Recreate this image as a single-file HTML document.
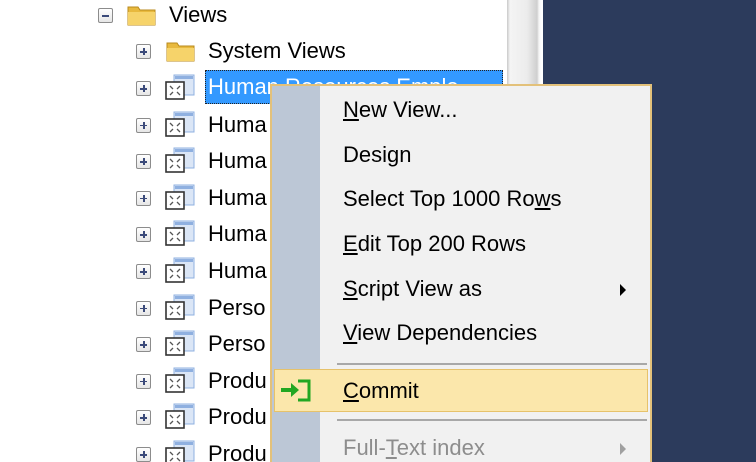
<!DOCTYPE html>
<html style="width:756px;height:462px;overflow:hidden"><head><style>
body{margin:0;width:756px;height:462px;overflow:hidden;position:relative;background:#fff;font-family:"Liberation Sans",sans-serif;}
.t{position:absolute;font-size:22px;color:#000;line-height:26px;white-space:nowrap}
.pb{position:absolute;left:136px;width:15px;height:15px;border:1px solid #8c8c8c;border-radius:2px;background:linear-gradient(#fff,#e6e6e6);box-sizing:border-box}
.pb:before{content:"";position:absolute;left:3px;top:6px;width:7px;height:1.6px;background:#3b4a7a}
.pb.p:after{content:"";position:absolute;left:6px;top:3px;width:1.6px;height:7px;background:#3b4a7a}
.ic{position:absolute;left:164px;width:32px;height:26px}
.fold{position:absolute;left:166px;width:30px;height:22px}
.m{position:absolute;left:343px;font-size:22px;line-height:26px;color:#000;white-space:nowrap}
u{text-decoration:underline;text-underline-offset:2px}
</style></head><body>
<div style="position:absolute;left:507px;top:0;width:36px;height:462px;background:linear-gradient(90deg,#c9c9c9 0,#f4f4f4 3px,#ececec 20px,#cfcfcf 30px,#f4f4f4 32px,#fff 34px)"></div>
<div style="position:absolute;left:543px;top:0;width:213px;height:462px;background:#2c3b5c"></div>

<div class="pb" style="left:98px;top:8px"></div>
<svg class="fold" style="left:127px;top:4px" viewBox="0 0 30 22"><path d="M1 3h10l2 3h15v15H1z" fill="#e8b93e" stroke="#b98a1c"/><path d="M1 8h27v13H1z" fill="#f6d36a"/></svg>
<div class="t" style="left:169px;top:2px">Views</div>

<div class="pb p" style="top:44px"></div>
<svg class="fold" style="top:40px" viewBox="0 0 30 22"><path d="M1 3h10l2 3h15v15H1z" fill="#e8b93e" stroke="#b98a1c"/><path d="M1 8h27v13H1z" fill="#f6d36a"/></svg>
<div class="t" style="left:208px;top:38px">System Views</div>

<div style="position:absolute;left:205px;top:70px;width:298px;height:34px;background:#3399ff;border:1px dotted #222;box-sizing:border-box"></div>
<div class="t" style="left:208px;top:74px;color:#fff">Human Resources.Emplo</div>

<div id="rows"></div>
<script>
var names=["","Huma","Huma","Huma","Huma","Huma","Perso","Perso","Produ","Produ","Produ"];
var h="";
for(var i=0;i<11;i++){var c=88+36.6*i;
h+='<div class="pb p" style="top:'+(c-7)+'px"></div>';
h+='<svg class="ic" style="top:'+(c-14)+'px" viewBox="0 0 32 26"><rect x="10" y="1" width="20" height="20" fill="#dbe6f6" stroke="#8fb0e0"/><rect x="11" y="2" width="18" height="3" fill="#8fb0e0"/><rect x="2" y="8" width="18" height="17" fill="#fff" stroke="#333" stroke-width="1.6"/><path d="M6 12l3 3M16 12l-3 3M6 21l3-3M16 21l-3-3" stroke="#555" stroke-width="1.3"/></svg>';
if(i>0)h+='<div class="t" style="left:208px;top:'+(c-13)+'px">'+names[i]+'</div>';}
document.getElementById("rows").innerHTML=h;
</script>

<div style="position:absolute;left:270px;top:84px;width:382px;height:378px;background:#f1f1f1;border:2px solid #e3c17a;border-bottom:none;box-sizing:border-box"></div>
<div style="position:absolute;left:272px;top:86px;width:48px;height:376px;background:#bcc7d6"></div>
<div class="m" style="top:97px"><u>N</u>ew View...</div>
<div class="m" style="top:142px">Design</div>
<div class="m" style="top:186px">Select Top 1000 Ro<u>w</u>s</div>
<div class="m" style="top:231px"><u>E</u>dit Top 200 Rows</div>
<div class="m" style="top:276px"><u>S</u>cript View as</div>
<svg style="position:absolute;left:618px;top:283px" width="10" height="14"><path d="M2 1l6 6-6 6z" fill="#000"/></svg>
<div class="m" style="top:320px"><u>V</u>iew Dependencies</div>
<div style="position:absolute;left:337px;top:363px;width:310px;height:2px;background:#a8a8a8"></div>
<div style="position:absolute;left:274px;top:369px;width:374px;height:43px;background:#fbe7ab;border:1px solid #e6c26b;box-sizing:border-box"></div>
<svg style="position:absolute;left:280px;top:379px" width="34" height="24" viewBox="0 0 34 24"><path d="M18 2h11v19H18" fill="none" stroke="#22a722" stroke-width="3"/><path d="M1 9h10V4l8 7-8 7v-5H1z" fill="#22a722"/></svg>
<div class="m" style="top:378px"><u>C</u>ommit</div>
<div style="position:absolute;left:337px;top:419px;width:310px;height:2px;background:#a8a8a8"></div>
<div class="m" style="top:435px;color:#8d8d8d">Full-<u>T</u>ext index</div>
<svg style="position:absolute;left:618px;top:442px" width="10" height="14"><path d="M2 1l6 6-6 6z" fill="#a0a0a0"/></svg>
</body></html>
